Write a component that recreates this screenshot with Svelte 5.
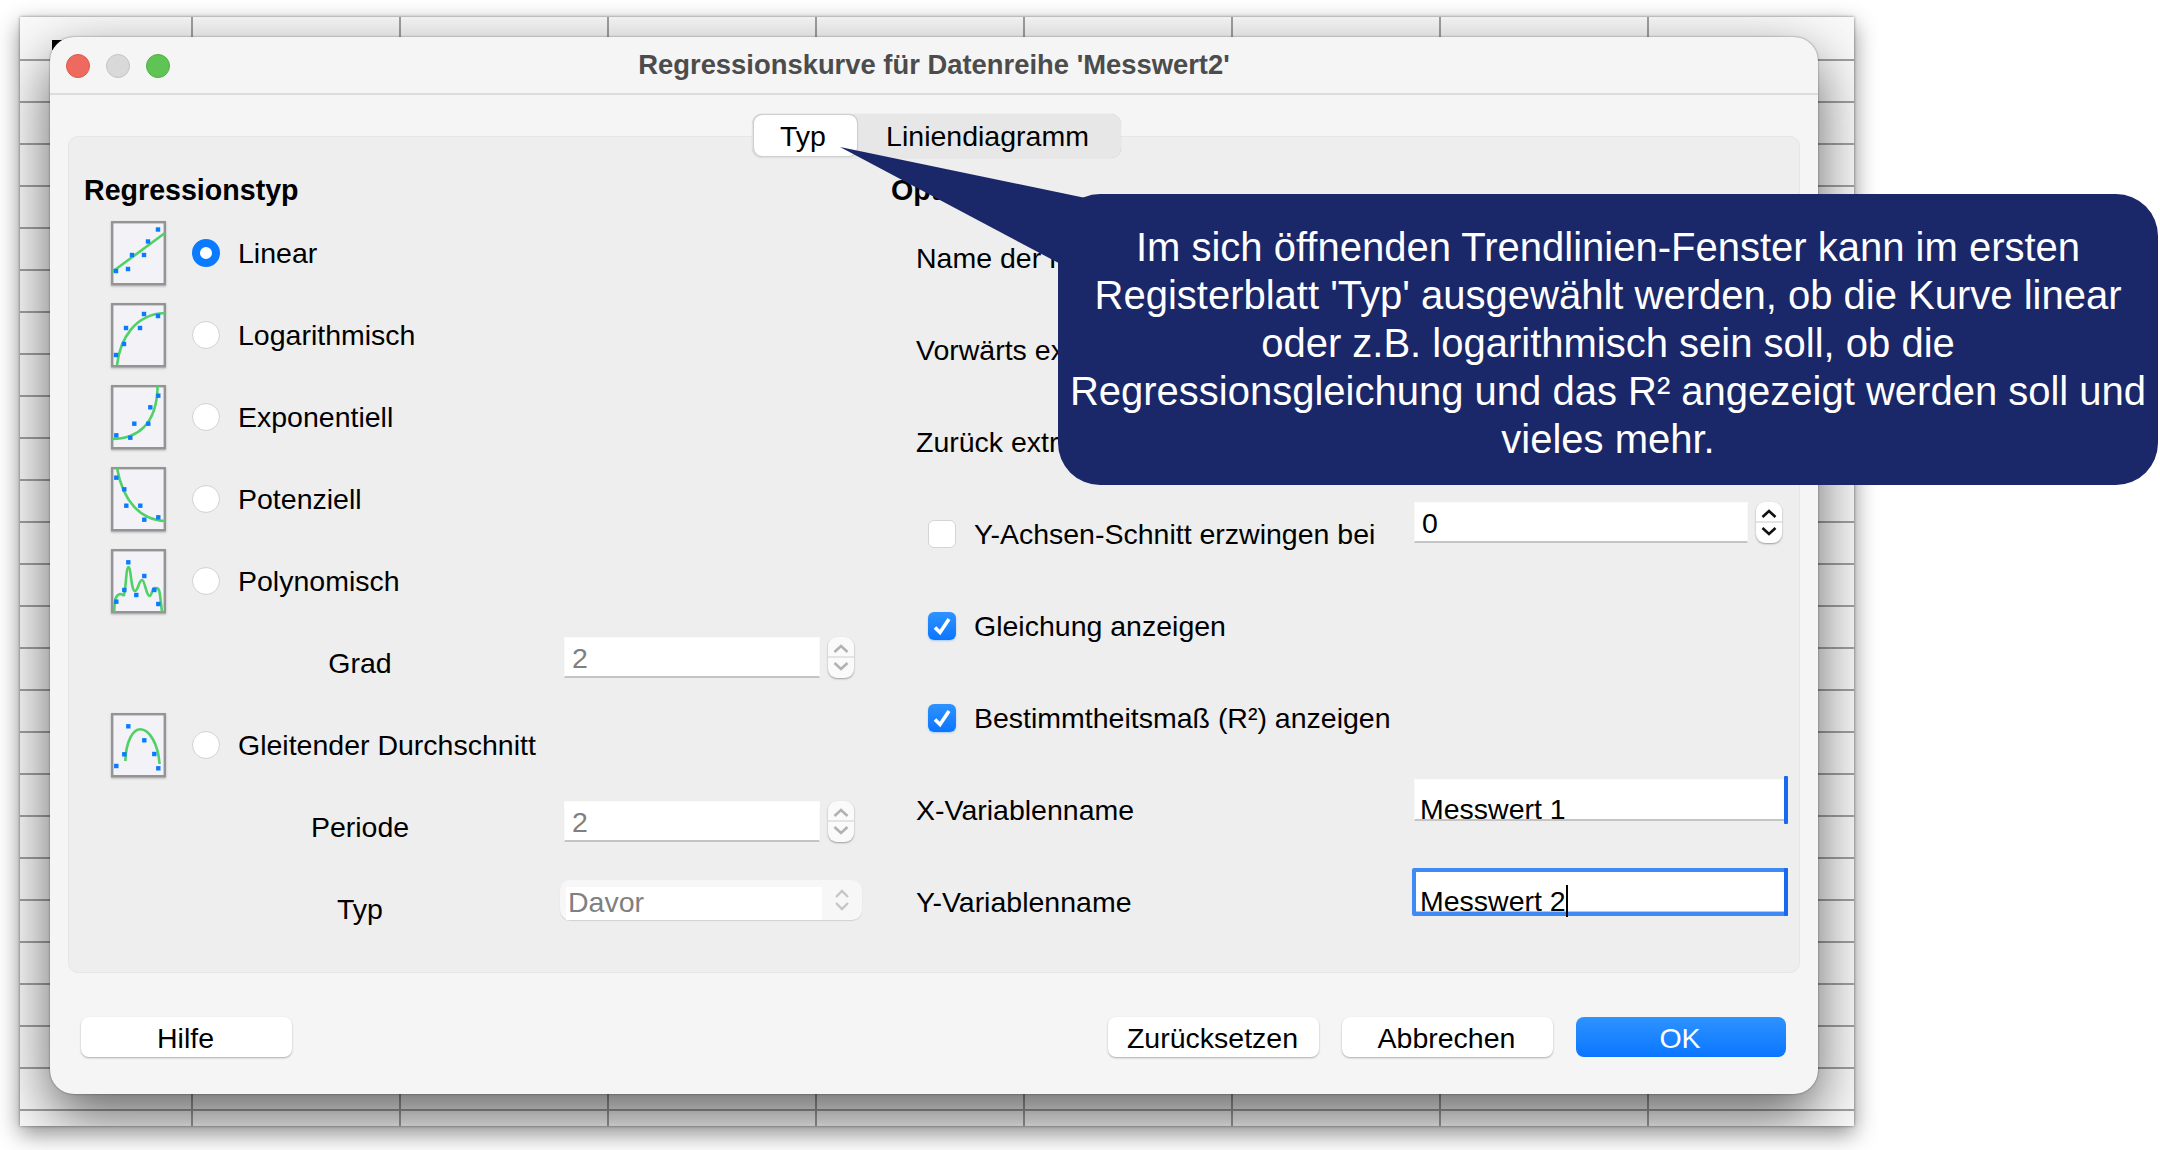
<script>
  const gridH = Array.from({ length: 26 }, (_, i) => 41.7 + i * 42);
  const gridV = Array.from({ length: 9 }, (_, i) => 171 + i * 208);

  const icons = {
    linear: {
      curve: 'M1 51 L54 12',
      points: [[5, 50], [17, 48], [21, 34], [33, 34], [37, 20.5], [47, 8.5]]
    },
    log: {
      curve: 'M6 62 C9 36 24 11 54 10',
      points: [[5, 52], [13, 41], [15, 25], [29, 25], [33, 11], [47, 13]]
    },
    exp: {
      curve: 'M1 54 C26 54 46 40 46.6 1',
      points: [[5.3, 50.3], [19.3, 52.7], [23.3, 38.7], [37.3, 38.7], [39.3, 22.3], [47.3, 10.7]]
    },
    pow: {
      curve: 'M6 1 C12 35 30 53 54 54',
      points: [[5.3, 10.7], [13.3, 22.3], [15.3, 38.7], [29.3, 38.7], [33.3, 52.7], [47.3, 50.3]]
    },
    poly: {
      curve: 'M3.3 63 C3.3 50 5 46 9 45 C12 45 12 47 13 46 C15 40 15 18 17.5 18 C20 18 20 42 24 42 C27 42 28 31 31 31 C34 31 35 47 38.6 47 C41 47 41 39 43.3 39 C46 39 48 38 49 46 L51 63',
      points: [[5.3, 52.7], [13.3, 41], [17.3, 13.3], [25.3, 46], [33.3, 27], [43.3, 41], [47.3, 55]]
    },
    avg: {
      curve: 'M14.3 48 C15 28 22 16.3 29.3 16.3 C38 16.3 47 30 48.6 51',
      points: [[5.3, 53], [13.3, 41.3], [17.3, 13.3], [33.3, 27.3], [43.3, 41], [47.3, 55.3]]
    }
  };
</script>

{#snippet chart(kind)}
  <svg class="chart" viewBox="0 0 55 65" width="55" height="65">
    <rect x="1.2" y="1.2" width="52.6" height="62" fill="#f2f2f7" stroke="#949497" stroke-width="2.4" />
    <path d={icons[kind].curve} fill="none" stroke="#4fd166" stroke-width="2.6" />
    {#each icons[kind].points as p}
      <rect x={p[0] - 2.2} y={p[1] - 2.2} width="4.4" height="4.4" fill="#0a7bff" />
    {/each}
  </svg>
{/snippet}

{#snippet radioRow(kind, label, checked = false)}
  <div class="type-row">
    {@render chart(kind)}
    <span class="radio" class:on={checked}></span>
    <span class="label">{label}</span>
  </div>
{/snippet}

{#snippet spin(disabled = false)}
  <span class="spin" class:disabled>
    <svg viewBox="0 0 26 41" width="26" height="41">
      <path d="M6.5 15 L13 9 L19.5 15 M6.5 26 L13 32 L19.5 26" fill="none" stroke="currentColor" stroke-width="2.6" />
    </svg>
  </span>
{/snippet}

{#snippet tick()}
  <svg viewBox="0 0 28 28" width="28" height="28"><path d="M7 15.5 L12 20.5 L21 7" fill="none" stroke="#fff" stroke-width="3.6" /></svg>
{/snippet}

<div class="page">
  <div class="sheet">
    <div class="grid" aria-hidden="true">
      {#each gridH as y}<i class="h" style="top:{y}px"></i>{/each}
      {#each gridV as x}<i class="v" style="left:{x}px"></i>{/each}
    </div>
    <i class="cursor"></i>

    <div class="dialog">
      <div class="titlebar">
        <div class="lights">
          <span class="light red"></span>
          <span class="light grey"></span>
          <span class="light green"></span>
        </div>
        <div class="title">Regressionskurve für Datenreihe 'Messwert2'</div>
      </div>

      <div class="panel-wrap">
        <div class="tabs">
          <span class="tab active">Typ</span>
          <span class="tab">Liniendiagramm</span>
        </div>
        <div class="panel">
          <section class="left">
            <h2>Regressionstyp</h2>
            {@render radioRow('linear', 'Linear', true)}
            {@render radioRow('log', 'Logarithmisch')}
            {@render radioRow('exp', 'Exponentiell')}
            {@render radioRow('pow', 'Potenziell')}
            {@render radioRow('poly', 'Polynomisch')}
            <div class="sub-row">
              <span class="sub-label">Grad</span>
              <span class="field off">2</span>
              {@render spin(true)}
            </div>
            {@render radioRow('avg', 'Gleitender Durchschnitt')}
            <div class="sub-row">
              <span class="sub-label">Periode</span>
              <span class="field off">2</span>
              {@render spin(true)}
            </div>
            <div class="sub-row">
              <span class="sub-label">Typ</span>
              <span class="select">
                <span class="select-value">Davor</span>
                <svg viewBox="0 0 20 30" width="20" height="30">
                  <path d="M4 12 L10 6 L16 12 M4 18 L10 24 L16 18" fill="none" stroke="#c6c6c6" stroke-width="2.4" />
                </svg>
              </span>
            </div>
          </section>

          <section class="right">
            <h2>Optionen</h2>
            <div class="opt-row"><span class="opt-label">Name der Regressionskurve</span></div>
            <div class="opt-row"><span class="opt-label">Vorwärts extrapolieren</span></div>
            <div class="opt-row"><span class="opt-label">Zurück extrapolieren</span></div>
            <div class="opt-row">
              <span class="check-label"><span class="check"></span>Y-Achsen-Schnitt erzwingen bei</span>
              <span class="field wide">0</span>
              {@render spin()}
            </div>
            <div class="opt-row">
              <span class="check-label">
                <span class="check on">{@render tick()}</span>
                Gleichung anzeigen
              </span>
            </div>
            <div class="opt-row">
              <span class="check-label">
                <span class="check on">{@render tick()}</span>
                Bestimmtheitsmaß (R²) anzeigen
              </span>
            </div>
            <div class="opt-row">
              <span class="opt-label">X-Variablenname</span>
              <span class="name-wrap"><span class="name-field">Messwert 1</span></span>
            </div>
            <div class="opt-row">
              <span class="opt-label">Y-Variablenname</span>
              <span class="name-wrap focus"><span class="name-field">Messwert 2<i class="caret"></i></span></span>
            </div>
          </section>
        </div>
      </div>

      <div class="buttons">
        <span class="btn help">Hilfe</span>
        <span class="spacer"></span>
        <span class="btn">Zurücksetzen</span>
        <span class="btn">Abbrechen</span>
        <span class="btn primary">OK</span>
      </div>
    </div>
  </div>

  <svg class="tail" viewBox="0 0 260 140" width="260" height="140">
    <path d="M0 0 L260 54 L260 138 Z" fill="#1a2769" />
  </svg>
  <div class="callout">
    Im sich öffnenden Trendlinien-Fenster kann im ersten Registerblatt 'Typ' ausgewählt werden, ob die Kurve linear oder z.B. logarithmisch sein soll, ob die Regressionsgleichung und das R² angezeigt werden soll und vieles mehr.
  </div>
</div>

<style>
  :global(body) {
    margin: 0;
    background: #fff;
  }

  .page {
    position: relative;
    width: 2160px;
    height: 1150px;
    padding: 17px 0 0 20px;
    box-sizing: border-box;
    overflow: hidden;
    font-family: "Liberation Sans", Arial, sans-serif;
    color: #000;
  }

  .sheet {
    position: relative;
    width: 1834px;
    height: 1109px;
    padding: 20px 0 0 30px;
    box-sizing: border-box;
    background: #f9f9f9;
    box-shadow: 0 0 3px rgba(0, 0, 0, 0.45), 0 8px 22px rgba(0, 0, 0, 0.45);
    overflow: hidden;
  }

  .grid i {
    position: absolute;
    background: #a0a0a0;
  }

  .grid .h {
    left: 0;
    right: 0;
    height: 2px;
  }

  .grid .v {
    top: 0;
    bottom: 0;
    width: 2px;
  }

  .cursor {
    position: absolute;
    left: 32px;
    top: 23px;
    width: 10px;
    height: 10px;
    background: #000;
  }

  .dialog {
    position: relative;
    width: 1768px;
    height: 1057px;
    background: #f5f5f5;
    border-radius: 24px;
    box-shadow: 0 0 2px rgba(0, 0, 0, 0.5), 0 22px 56px rgba(0, 0, 0, 0.6);
    display: flex;
    flex-direction: column;
  }

  .titlebar {
    position: relative;
    height: 58px;
    flex: none;
    box-sizing: border-box;
    border-bottom: 2px solid #dcdcdc;
    display: flex;
    align-items: center;
    justify-content: center;
  }

  .lights {
    position: absolute;
    left: 16px;
    top: 17px;
    display: flex;
    gap: 16px;
  }

  .light {
    width: 24px;
    height: 24px;
    border-radius: 50%;
    box-sizing: border-box;
  }

  .light.red { background: #ee6a5f; border: 1px solid #e0564b; }
  .light.grey { background: #d9d9d9; border: 1px solid #c4c4c4; }
  .light.green { background: #5fc454; border: 1px solid #52ae46; }

  .title {
    font-size: 27.4px;
    font-weight: 700;
    color: #4c4c4c;
  }

  .panel-wrap {
    position: relative;
    margin: 41px 18px 0 18px;
    height: 837px;
    flex: none;
  }

  .tabs {
    position: absolute;
    left: 684px;
    top: -22px;
    height: 44px;
    padding: 1px 2px;
    box-sizing: border-box;
    display: flex;
    z-index: 1;
    background: #e7e7e7;
    border-radius: 10px;
    box-shadow: 0 0 1px rgba(0, 0, 0, 0.22);
  }

  .tab {
    display: flex;
    align-items: center;
    justify-content: center;
    width: 262px;
    height: 41px;
    font-size: 28.5px;
    padding: 2px 1px 0 0;
    box-sizing: border-box;
    border-radius: 8px;
  }

  .tab.active {
    width: 103px;
    padding-right: 5px;
    background: #fff;
    box-shadow: 0 0 2px rgba(0, 0, 0, 0.4);
  }

  .panel {
    height: 100%;
    box-sizing: border-box;
    background: #eeeeee;
    border: 1px solid #e6e6e6;
    border-radius: 10px;
    display: flex;
  }

  h2 {
    margin: 0;
    height: 75px;
    padding-top: 36px;
    box-sizing: border-box;
    font-size: 28.6px;
    font-weight: 700;
    line-height: 34px;
  }

  .left {
    width: 829px;
    padding-left: 15px;
    box-sizing: border-box;
    flex: none;
  }

  .type-row {
    display: flex;
    align-items: center;
    height: 82px;
    padding-left: 27px;
  }

  .chart {
    flex: none;
    filter: drop-shadow(0 1px 1px rgba(0, 0, 0, 0.25));
  }

  .radio {
    width: 28px;
    height: 28px;
    margin: 0 18px 0 26px;
    border-radius: 50%;
    box-sizing: border-box;
    background: #fff;
    border: 1px solid #d2d2d2;
    flex: none;
  }

  .radio.on {
    background: #fff;
    border: 8px solid #0a7bff;
  }

  .label,
  .opt-label,
  .sub-label,
  .check-label {
    font-size: 28.5px;
    white-space: nowrap;
  }

  .sub-row {
    display: flex;
    align-items: center;
    height: 82px;
  }

  .sub-label {
    width: 480px;
    padding-left: 72px;
    box-sizing: border-box;
    text-align: center;
    flex: none;
  }

  .field {
    display: block;
    width: 256px;
    height: 41px;
    line-height: 41px;
    padding-left: 7px;
    box-sizing: border-box;
    background: #fff;
    border: 1px solid #fafafa;
    border-bottom: 2px solid #c4c4c4;
    font-size: 28.5px;
    flex: none;
    margin-top: -11px;
  }

  .field.off {
    color: #808080;
  }

  .spin {
    width: 26px;
    height: 41px;
    margin-left: 8px;
    margin-top: -11px;
    background: #fff;
    border-radius: 9px;
    color: #111;
    box-shadow: 0 1px 2px rgba(0, 0, 0, 0.35);
    flex: none;
    display: block;
    position: relative;
  }

  .spin svg {
    display: block;
  }

  .spin::after {
    content: "";
    position: absolute;
    left: 0;
    right: 0;
    top: 19px;
    height: 2px;
    background: #e4e4e4;
  }

  .spin.disabled {
    color: #b2b2b2;
    background: #fafafa;
  }

  .select {
    width: 302px;
    height: 40px;
    margin-left: -4px;
    margin-top: -18px;
    background: #f7f7f7;
    border-radius: 10px;
    display: flex;
    align-items: flex-start;
    padding-left: 6px;
    box-sizing: border-box;
    box-shadow: 0 1px 1px rgba(0, 0, 0, 0.12);
    flex: none;
  }

  .select-value {
    width: 256px;
    height: 33px;
    line-height: 31px;
    margin-top: 7px;
    background: #fff;
    font-size: 28.5px;
    color: #808080;
    padding-left: 2px;
    box-sizing: border-box;
    flex: none;
    overflow: hidden;
  }

  .select svg {
    margin: 5px 0 0 10px;
  }

  .right {
    flex: 1;
    padding-left: 18px;
    min-width: 0;
  }

  .right h2 {
    margin-left: -25px;
  }

  .opt-row {
    display: flex;
    align-items: center;
    height: 92px;
  }

  .opt-label {
    width: 498px;
    flex: none;
  }

  .check-label {
    width: 498px;
    display: flex;
    align-items: center;
    gap: 18px;
    padding-left: 12px;
    box-sizing: border-box;
    flex: none;
  }

  .check {
    width: 28px;
    height: 28px;
    border-radius: 6px;
    background: #fff;
    box-sizing: border-box;
    border: 1px solid #d4d4d4;
    flex: none;
    overflow: hidden;
  }

  .check.on {
    background: linear-gradient(#2e93ff, #0a76ff);
    border: none;
    box-shadow: 0 1px 2px rgba(10, 118, 255, 0.3);
  }

  .check svg {
    display: block;
  }

  .field.wide {
    width: 334px;
    margin-top: -24px;
  }

  .field.wide + .spin {
    margin-top: -24px;
  }

  .name-wrap {
    position: relative;
    display: block;
    width: 374px;
    height: 42px;
    margin-top: -20px;
    flex: none;
  }

  .name-wrap::after {
    content: "";
    position: absolute;
    right: 0;
    top: -3px;
    bottom: -3px;
    width: 4px;
    background: #1669f0;
    border-radius: 1px;
  }

  .name-field {
    display: block;
    height: 100%;
    box-sizing: border-box;
    padding-left: 5px;
    background: #fff;
    border: 1px solid #fafafa;
    border-bottom: 2px solid #c4c4c4;
    font-size: 28.5px;
    line-height: 58px;
    overflow: hidden;
  }

  .name-wrap.focus {
    width: 376px;
    height: 48px;
    margin-left: -2px;
    border: 4px solid #3f8af5;
    border-radius: 2px;
    box-sizing: border-box;
  }

  .name-wrap.focus::after {
    right: -4px;
    top: -4px;
    bottom: -4px;
  }

  .name-wrap.focus .name-field {
    padding-left: 4px;
    border: none;
    border-bottom: 1px solid #c4c4c4;
    line-height: 58px;
    overflow: visible;
    position: relative;
  }

  .caret {
    position: absolute;
    top: 13px;
    width: 2px;
    height: 32px;
    background: #000;
  }

  .buttons {
    display: flex;
    align-items: flex-start;
    gap: 23px;
    padding: 44px 32px 0 31px;
  }

  .spacer {
    flex: 1;
  }

  .btn {
    width: 211px;
    height: 40px;
    padding-right: 2px;
    box-sizing: border-box;
    line-height: 42px;
    text-align: center;
    background: #fff;
    border-radius: 8px;
    box-shadow: 0 1px 2px rgba(0, 0, 0, 0.3);
    font-size: 28.5px;
  }

  .btn.primary {
    width: 210px;
    background: linear-gradient(#2e93ff, #0a76ff);
    color: #fff;
    box-shadow: none;
  }

  .tail {
    position: absolute;
    left: 840px;
    top: 147px;
    z-index: 2;
  }

  .callout {
    position: absolute;
    z-index: 2;
    left: 1058px;
    top: 194px;
    width: 1100px;
    height: 291px;
    box-sizing: border-box;
    padding: 29px 6px 0;
    background: #1a2769;
    border-radius: 42px;
    color: #fff;
    font-size: 40px;
    line-height: 48px;
    text-align: center;
  }
</style>
